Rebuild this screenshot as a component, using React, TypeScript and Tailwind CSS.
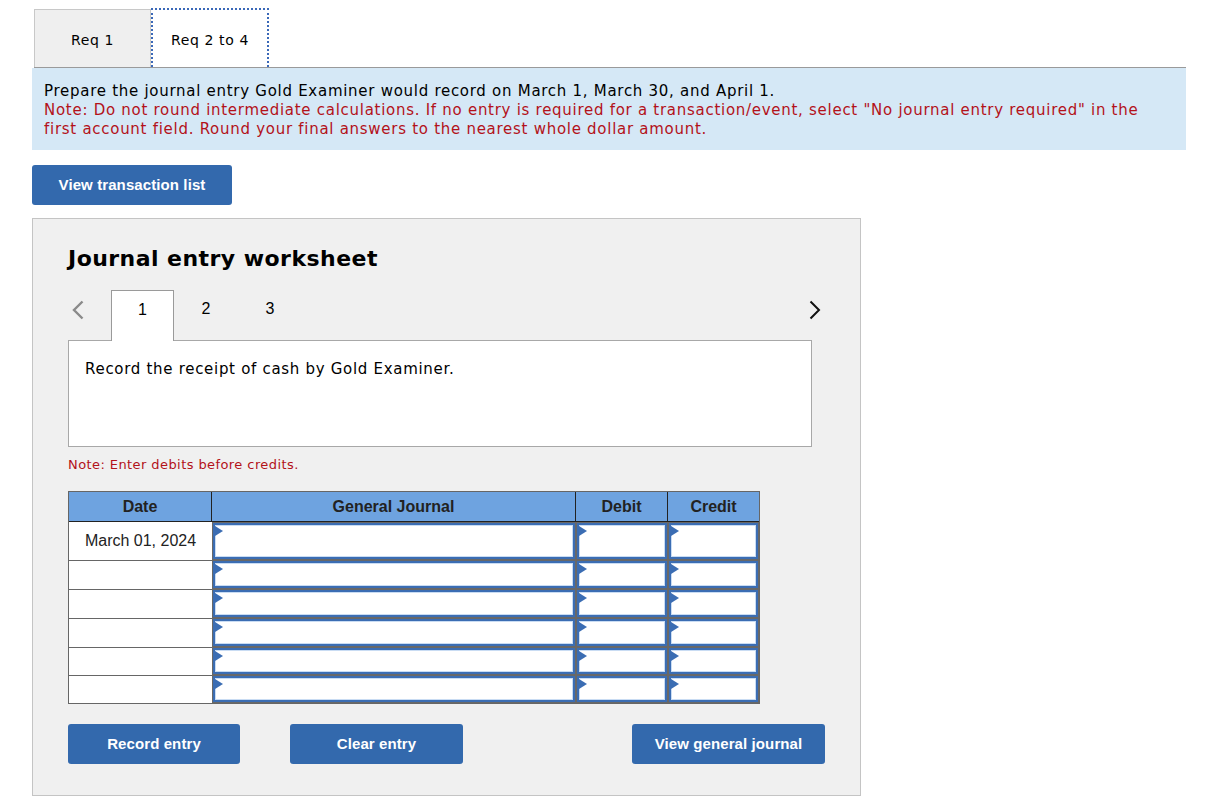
import React from "react";

const verdana = { fontFamily: '"DejaVu Sans", Verdana, sans-serif' };
const arial = { fontFamily: '"Liberation Sans", Arial, sans-serif' };

const InputCell = ({ w }: { w: string }) => (
  <div className={`${w} h-full bg-[#686868] p-[1px]`}>
    <div className="relative h-full border-2 border-[#3b6db3]">
      <div className="h-full border border-[#c9dcf3] bg-white" />
      <span className="absolute left-0 top-[1px] w-0 h-0 border-l-[8px] border-l-[#3b6db3] border-y-[5px] border-y-transparent" />
    </div>
  </div>
);

const rows = [
  { date: "March 01, 2024", h: "h-[38px]" },
  { date: "", h: "h-[29px]" },
  { date: "", h: "h-[29px]" },
  { date: "", h: "h-[29px]" },
  { date: "", h: "h-[28px]" },
  { date: "", h: "h-[28px]" },
];

const Btn = ({ label, w, cls = "" }: { label: string; w: string; cls?: string }) => (
  <button
    className={`${w} h-[40px] rounded-[3px] bg-[#3369ad] text-white text-[15px] font-bold tracking-[0.1px] ${cls}`}
    style={arial}
  >
    {label}
  </button>
);

export default function App() {
  return (
    <div className="w-[1228px] h-[812px] bg-white pl-[32px] pt-[8px]" style={verdana}>
      {/* Req tabs */}
      <div className="flex items-end w-[1152px] ml-[2px] border-b border-[#9a9a9a] h-[60px]">
        <div className="w-[117px] h-[58px] bg-[#efefef] border border-b-0 border-[#c8c8c8] flex items-center justify-center pt-[4px] text-[14px] tracking-[0.6px] text-black">
          Req 1
        </div>
        <div className="w-[118px] h-[59px] bg-white border-2 border-b-0 border-dotted border-[#3a68b8] flex items-center justify-center pt-[4px] text-[14px] tracking-[0.6px] text-black">
          Req 2 to 4
        </div>
      </div>

      {/* Instructions */}
      <div className="w-[1154px] h-[82px] bg-[#d5e8f6] px-[12px] pt-[14px] text-[15px] leading-[19px] tracking-[0.72px]">
        <div className="text-black">
          Prepare the journal entry Gold Examiner would record on March 1, March 30, and April 1.
        </div>
        <div className="text-[#b3121a]">
          Note: Do not round intermediate calculations. If no entry is required for a transaction/event, select "No journal entry required" in the first account field. Round your final answers to the nearest whole dollar amount.
        </div>
      </div>

      <Btn label="View transaction list" w="w-[200px]" cls="mt-[15px] block" />

      {/* Worksheet panel */}
      <div className="mt-[13px] w-[829px] h-[578px] bg-[#f0f0f0] border border-[#c4c4c4] pl-[35px] pt-[24px]">
        <h2 className="text-[22px] font-bold leading-[32px] tracking-[0.45px] text-black">Journal entry worksheet</h2>

        <div className="mt-[15px] flex items-start h-[50px] w-[753px]">
          <svg width="12" height="20" viewBox="0 0 12 20" className="mt-[10px] ml-[4px]">
            <path d="M10.5 1.5 L2 10 L10.5 18.5" fill="none" stroke="#8a8a8a" strokeWidth="2.4" />
          </svg>
          <div
            className="relative z-10 ml-[27px] w-[63px] h-[51px] bg-white border border-b-0 border-[#9a9a9a] pt-[9px] text-center text-[16px] leading-[20px] text-black"
            style={arial}
          >
            1
          </div>
          <div className="w-[64px] pt-[9px] text-center text-[16px] leading-[20px] text-black" style={arial}>
            2
          </div>
          <div className="w-[64px] pt-[9px] text-center text-[16px] leading-[20px] text-black" style={arial}>
            3
          </div>
          <svg width="12" height="20" viewBox="0 0 12 20" className="ml-auto mt-[10px]">
            <path d="M1.5 1.5 L10 10 L1.5 18.5" fill="none" stroke="#111" strokeWidth="2" />
          </svg>
        </div>

        <div className="w-[744px] h-[107px] bg-white border border-[#a8a8a8] pl-[16px] pt-[18px] text-[15px] leading-[20px] tracking-[0.7px] text-black">
          Record the receipt of cash by Gold Examiner.
        </div>

        <div className="mt-[9px] text-[13px] leading-[18px] tracking-[0.42px] text-[#b3121a]">Note: Enter debits before credits.</div>

        {/* Journal table */}
        <div className="mt-[17px] w-[692px] border border-[#666]" style={arial}>
          <div className="flex h-[30px] bg-[#6ea3e0] border-b border-[#222] text-[16px] font-bold text-[#222]">
            <div className="w-[143px] border-r border-[#222] flex items-center justify-center">Date</div>
            <div className="w-[364px] border-r border-[#222] flex items-center justify-center">General Journal</div>
            <div className="w-[92px] border-r border-[#222] flex items-center justify-center">Debit</div>
            <div className="w-[91px] flex items-center justify-center">Credit</div>
          </div>
          {rows.map((r, i) => (
            <div key={i} className={`flex ${r.h}`}>
              <div className={`w-[143px] bg-white flex items-center justify-center text-[16px] text-[#222] ${i > 0 ? "border-t border-[#666]" : ""}`}>
                {r.date}
              </div>
              <InputCell w="w-[364px]" />
              <InputCell w="w-[92px]" />
              <InputCell w="w-[91px]" />
            </div>
          ))}
        </div>

        <div className="mt-[20px] flex">
          <Btn label="Record entry" w="w-[172px]" />
          <Btn label="Clear entry" w="w-[173px]" cls="ml-[50px]" />
          <Btn label="View general journal" w="w-[193px]" cls="ml-[169px]" />
        </div>
      </div>
    </div>
  );
}
